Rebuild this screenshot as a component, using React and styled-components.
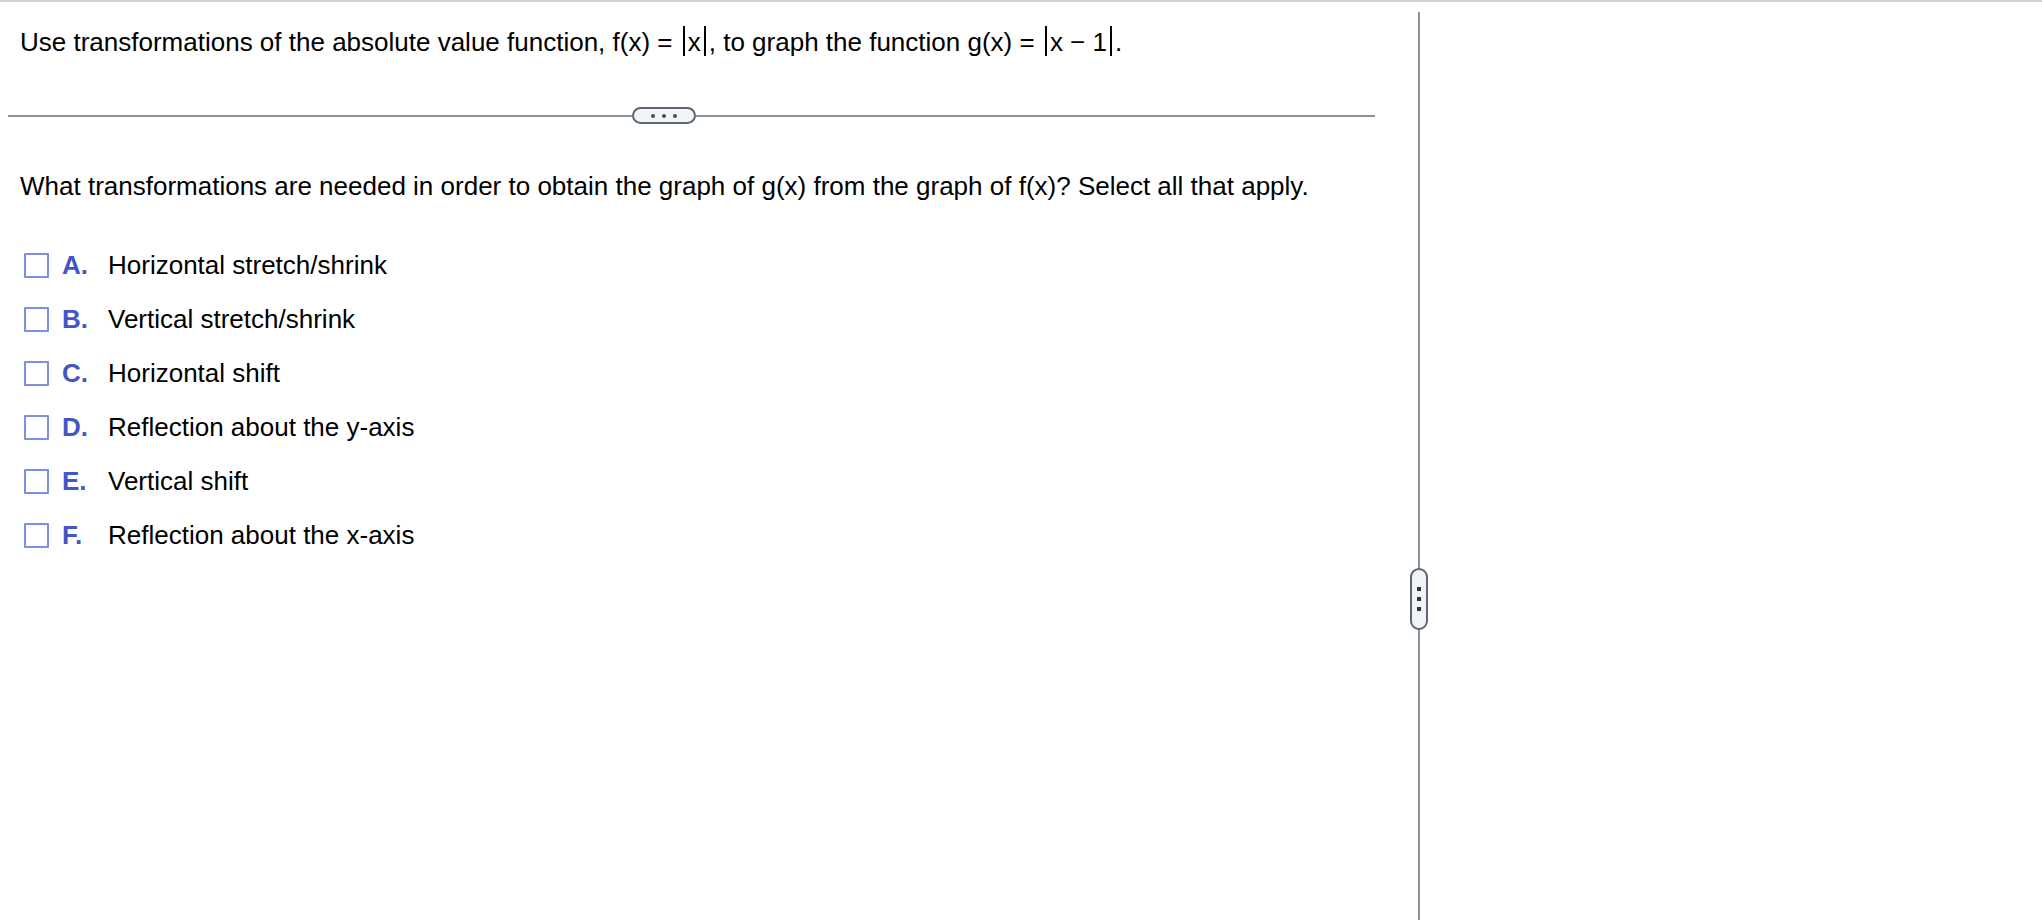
import React from 'react';
import styled, { createGlobalStyle } from 'styled-components';

const GlobalStyle = createGlobalStyle`
    html, body {
        margin: 0;
        padding: 0;
        background: #ffffff;
    }
    body {
        font-family: "Liberation Sans", Arial, Helvetica, sans-serif;
        color: #000000;
    }
`;

const options = [
    { letter: 'A.', text: 'Horizontal stretch/shrink' },
    { letter: 'B.', text: 'Vertical stretch/shrink' },
    { letter: 'C.', text: 'Horizontal shift' },
    { letter: 'D.', text: 'Reflection about the y-axis' },
    { letter: 'E.', text: 'Vertical shift' },
    { letter: 'F.', text: 'Reflection about the x-axis' },
];

class App extends React.Component {
    render() {
        return (
            <Page>
                <GlobalStyle />
                <LeftPane>
                    <Title>
                        Use transformations of the absolute value function, f(x) = <AbsBar />x<AbsBar />, to graph the function g(x) = <AbsBar />x − 1<AbsBar />.
                    </Title>
                    <Divider>
                        <LeftLine />
                        <HPill>
                            <RoundDot />
                            <RoundDot />
                            <RoundDot />
                        </HPill>
                        <RightLine />
                    </Divider>
                    <Question>
                        What transformations are needed in order to obtain the graph of g(x) from the graph of f(x)? Select all that apply.
                    </Question>
                    <OptionList>
                        {options.map((o) => (
                            <OptionRow key={o.letter}>
                                <CheckBox />
                                <Letter>{o.letter}</Letter>
                                <Label>{o.text}</Label>
                            </OptionRow>
                        ))}
                    </OptionList>
                </LeftPane>
                <Splitter>
                    <VPill>
                        <SquareDot />
                        <SquareDot />
                        <SquareDot />
                    </VPill>
                </Splitter>
                <RightPane />
            </Page>
        );
    }
}

export default App;

const Page = styled.div`
    display: flex;
    height: 920px;
    box-sizing: border-box;
    border-top: 2px solid #cdd2dd;
    overflow: hidden;
`;

const LeftPane = styled.div`
    width: 1418px;
    flex-shrink: 0;
    box-sizing: border-box;
    padding: 24px 43px 0 8px;
    font-size: 26px;
`;

const Title = styled.div`
    line-height: 30px;
    padding-left: 12px;
    white-space: nowrap;
`;

const AbsBar = styled.span`
    display: inline-block;
    width: 2px;
    height: 30px;
    background: #000000;
    margin: 0 3px;
    vertical-align: -5px;
`;

const Divider = styled.div`
    display: flex;
    align-items: center;
    margin-top: 50px;
    height: 17px;
`;

const LeftLine = styled.div`
    width: 624px;
    height: 2px;
    background: #8a919e;
`;

const RightLine = styled.div`
    flex: 1;
    height: 2px;
    background: #8a919e;
`;

const HPill = styled.div`
    width: 64px;
    height: 17px;
    box-sizing: border-box;
    border: 2px solid #5b6575;
    border-radius: 9px;
    background: #f2f3f6;
    display: flex;
    align-items: center;
    justify-content: center;
    gap: 7px;
`;

const RoundDot = styled.span`
    width: 4px;
    height: 4px;
    border-radius: 50%;
    background: #474d59;
`;

const Question = styled.div`
    margin-top: 47px;
    line-height: 30px;
    padding-left: 12px;
    white-space: nowrap;
`;

const OptionList = styled.div`
    margin-top: 37px;
    display: flex;
    flex-direction: column;
`;

const OptionRow = styled.div`
    display: flex;
    align-items: center;
    height: 54px;
    padding-left: 16px;
`;

const CheckBox = styled.span`
    width: 25px;
    height: 25px;
    box-sizing: border-box;
    border: 2px solid #7d8fe0;
    border-radius: 1px;
    background: #ffffff;
    margin-right: 13px;
    flex-shrink: 0;
`;

const Letter = styled.span`
    width: 46px;
    font-weight: bold;
    color: #4256c6;
    line-height: 30px;
`;

const Label = styled.span`
    line-height: 30px;
    white-space: nowrap;
`;

const Splitter = styled.div`
    position: relative;
    width: 2px;
    flex-shrink: 0;
    margin-top: 10px;
    background: #8a919e;
`;

const VPill = styled.div`
    position: absolute;
    left: -8px;
    top: 556px;
    width: 18px;
    height: 62px;
    box-sizing: border-box;
    border: 2px solid #5b6575;
    border-radius: 9px;
    background: #f2f3f6;
    display: flex;
    flex-direction: column;
    align-items: center;
    justify-content: center;
    gap: 6px;
`;

const SquareDot = styled.span`
    width: 4px;
    height: 4px;
    background: #333333;
`;

const RightPane = styled.div`
    flex: 1;
`;
